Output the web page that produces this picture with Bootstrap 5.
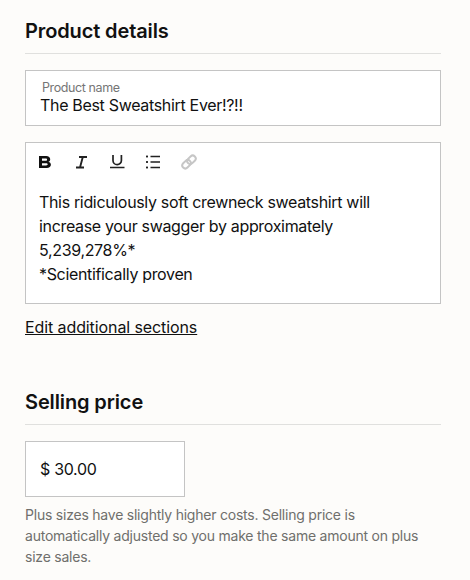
<!DOCTYPE html>
<html lang="en">
<head>
<meta charset="utf-8">
<title>Product details</title>
<link href="https://cdn.jsdelivr.net/npm/bootstrap@5.3.0/dist/css/bootstrap.min.css" rel="stylesheet">
<style>
html, body { height: 100%; overflow: hidden; }
body { background: #fdfcfa; font-family: Inter, "Liberation Sans", sans-serif; color: #111; }
.pg { padding: 18px 29px 0 25px; }
.sec-title { font-size: 20px; line-height: 26px; font-weight: 600; margin: 0; padding-bottom: 9px; border-bottom: 1px solid #e0e0de; color: #111; letter-spacing: -0.006em; }
.fld { background: #fff; border: 1px solid #c4c4c4; }
.name-fld { height: 56px; margin-top: 16px; padding: 9px 14px; }
.name-lab { display: block; font-size: 12.5px; line-height: 16px; color: #757575; padding-left: 2px; letter-spacing: -0.032em; }
.name-val { font-size: 16px; line-height: 20px; color: #111; margin-top: -1px; letter-spacing: -0.02em; }
.editor { height: 162px; margin-top: 16px; padding: 0 13px; }
.tools { height: 38px; gap: 20px; margin-left: -2px; }
.tools svg { display: block; flex: none; }
.etext { margin-top: 9px; font-size: 16px; line-height: 24px; letter-spacing: -0.021em; }
.more { display: inline-block; margin-top: 13px; font-size: 16px; line-height: 20px; color: #111; text-decoration: underline; letter-spacing: -0.006em; }
.sec2 { margin-top: 50px; }
.price { width: 160px; height: 56px; margin-top: 16px; padding-left: 14px; font-size: 16px; letter-spacing: -0.02em; }
.hint { margin: 7px 0 0; font-size: 14px; line-height: 21px; color: #6f6f6c; letter-spacing: -0.016em; }
</style>
</head>
<body>
<div class="pg">
  <h2 class="sec-title">Product details</h2>
  <div class="fld name-fld">
    <span class="name-lab">Product name</span>
    <div class="name-val">The Best Sweatshirt Ever!?!!</div>
  </div>
  <div class="fld editor">
    <div class="tools d-flex align-items-center">
      <svg width="16" height="16" viewBox="0 0 16 16" aria-label="Bold"><path fill="#111" fill-rule="evenodd" d="M2 2h7.200c2.500 0 4 1.300 4 3.200 0 1.300-.7 2.200-1.800 2.600 1.500.4 2.500 1.500 2.500 3 0 2-1.600 3.200-4.200 3.200H2zM5 4.500v2.300h3.700c.9 0 1.400-.4 1.400-1.150 0-.75-.5-1.150-1.400-1.150zM5 9.200v2.300h4.100c1 0 1.600-.4 1.600-1.150 0-.75-.6-1.150-1.600-1.150z"/></svg>
      <svg width="16" height="16" viewBox="0 0 16 16" aria-label="Italic"><path fill="none" stroke="#222" stroke-width="1.900" d="M6 3h8M3 13.500h8M9.800 3l-2.800 10.500"/></svg>
      <svg width="16" height="16" viewBox="0 0 16 16" aria-label="Underline"><path fill="none" stroke="#222" stroke-width="1.700" d="M4 1v5.500a4.200 4.200 0 0 0 8.400 0V1M1 13.500h14.500"/></svg>
      <svg width="16" height="16" viewBox="0 0 16 16" aria-label="List"><path fill="none" stroke="#222" stroke-width="1.500" d="M5.500 2.500H15M5.500 8H15M5.500 13.500H15"/><g fill="#222"><rect x="1" y="1.600" width="2" height="1.800"/><rect x="1" y="7.100" width="2" height="1.800"/><rect x="1" y="12.600" width="2" height="1.800"/></g></svg>
      <svg width="16" height="16" viewBox="0 0 16 16" aria-label="Link"><g fill="none" stroke="#c6c6c6" stroke-width="2"><rect x="0.800" y="7.200" width="9.500" height="6" rx="3" transform="rotate(-45 5.550 10.200)"/><rect x="5.700" y="2.800" width="9.500" height="6" rx="3" transform="rotate(-45 10.450 5.800)"/></g></svg>
    </div>
    <div class="etext">This ridiculously soft crewneck sweatshirt will increase your swagger by approximately 5,239,278%*<br>*Scientifically proven</div>
  </div>
  <a class="more" href="#">Edit additional sections</a>
  <div class="sec2">
    <h2 class="sec-title">Selling price</h2>
    <div class="fld price d-flex align-items-center">$ 30.00</div>
    <p class="hint">Plus sizes have slightly higher costs. Selling price is automatically adjusted so you make the same amount on plus size sales.</p>
  </div>
</div>
<script src="https://cdn.jsdelivr.net/npm/bootstrap@5.3.0/dist/js/bootstrap.bundle.min.js"></script>
</body>
</html>
